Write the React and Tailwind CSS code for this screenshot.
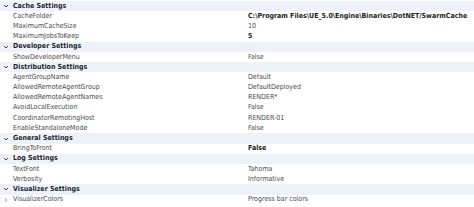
import React from 'react';

const groups = [
  {
    title: 'Cache Settings',
    items: [
      ['CacheFolder', 'C:\\Program Files\\UE_5.0\\Engine\\Binaries\\DotNET/SwarmCache', true],
      ['MaximumCacheSize', '10'],
      ['MaximumJobsToKeep', '5', true],
    ],
  },
  { title: 'Developer Settings', items: [['ShowDeveloperMenu', 'False']] },
  {
    title: 'Distribution Settings',
    items: [
      ['AgentGroupName', 'Default'],
      ['AllowedRemoteAgentGroup', 'DefaultDeployed'],
      ['AllowedRemoteAgentNames', 'RENDER*'],
      ['AvoidLocalExecution', 'False'],
      ['CoordinatorRemotingHost', 'RENDER-01'],
      ['EnableStandaloneMode', 'False'],
    ],
  },
  { title: 'General Settings', items: [['BringToFront', 'False', true]] },
  {
    title: 'Log Settings',
    items: [
      ['TextFont', 'Tahoma'],
      ['Verbosity', 'Informative'],
    ],
  },
  {
    title: 'Visualizer Settings',
    items: [['VisualizerColors', 'Progress bar colors', false, true]],
  },
];

function Chevron({ open }) {
  return (
    <svg width="6" height="6" viewBox="0 0 6 6" className="shrink-0">
      {open ? (
        <path d="M1 2 L3 4 L5 2" fill="none" stroke="#333" strokeWidth="0.9" />
      ) : (
        <path d="M2 1 L4 3 L2 5" fill="none" stroke="#999" strokeWidth="0.9" />
      )}
    </svg>
  );
}

export default function App() {
  return (
    <div className="w-[474px] h-[207px] overflow-hidden bg-white pt-px text-[7px] leading-none whitespace-nowrap font-['DejaVu_Sans_Condensed','DejaVu_Sans',sans-serif]">
      {groups.map((g) => (
        <div key={g.title}>
          <div className="flex items-center h-[10.2px] bg-[#eef1f7] pl-[3px]">
            <Chevron open />
            <span className="ml-[4px] font-bold text-[#1d2433]">{g.title}</span>
          </div>
          {g.items.map(([name, value, bold, expandable]) => (
            <div key={name} className="flex items-center h-[10.2px] bg-white">
              <div className="w-[248px] shrink-0 flex items-center pl-[3px]">
                {expandable ? <Chevron /> : <span className="w-[6px]" />}
                <span className="ml-[4px] text-[#4a4a4a]">{name}</span>
              </div>
              <span className={bold ? 'font-bold text-[#1d1d1d]' : 'text-[#4a4a4a]'}>{value}</span>
            </div>
          ))}
        </div>
      ))}
    </div>
  );
}
